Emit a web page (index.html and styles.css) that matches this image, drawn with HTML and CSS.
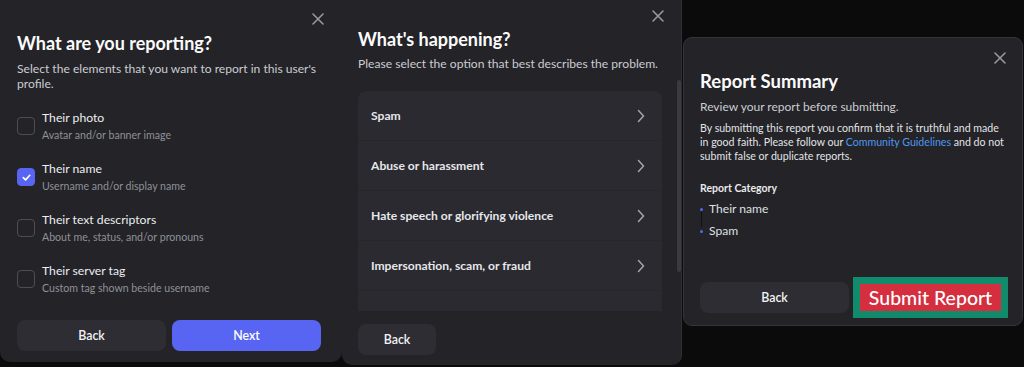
FILE: index.html
```html
<!DOCTYPE html>
<html lang="en">
<head>
<meta charset="utf-8">
<title>Report flow</title>
<link rel="stylesheet" href="styles.css">
</head>
<body>
<div class="stage">
  <section class="shot shot-1">
    <div class="modal m1">
      <button class="close" aria-label="Close"><svg viewBox="0 0 12 12" width="12" height="12"><path d="M1 1L11 11M11 1L1 11" stroke="currentColor" stroke-width="1.5" stroke-linecap="round"/></svg></button>
      <h1 class="title t1">What are you reporting?</h1>
      <p class="sub s1">Select the elements that you want to report in this user's profile.</p>
      <ul class="checks">
        <li class="check"><span class="box"></span><div class="ctext"><div class="cname">Their photo</div><div class="cdesc">Avatar and/or banner image</div></div></li>
        <li class="check"><span class="box on"><svg viewBox="0 0 12 12" width="11" height="11"><path d="M2.5 6.2L5 8.6L9.6 3.6" fill="none" stroke="#fff" stroke-width="1.8" stroke-linecap="round" stroke-linejoin="round"/></svg></span><div class="ctext"><div class="cname">Their name</div><div class="cdesc">Username and/or display name</div></div></li>
        <li class="check"><span class="box"></span><div class="ctext"><div class="cname">Their text descriptors</div><div class="cdesc">About me, status, and/or pronouns</div></div></li>
        <li class="check"><span class="box"></span><div class="ctext"><div class="cname">Their server tag</div><div class="cdesc">Custom tag shown beside username</div></div></li>
      </ul>
      <div class="actions a1">
        <button class="btn secondary wide">Back</button>
        <button class="btn primary wide">Next</button>
      </div>
    </div>
  </section>

  <section class="shot shot-2">
    <div class="modal m2">
      <button class="close" aria-label="Close"><svg viewBox="0 0 12 12" width="12" height="12"><path d="M1 1L11 11M11 1L1 11" stroke="currentColor" stroke-width="1.5" stroke-linecap="round"/></svg></button>
      <h1 class="title t2">What's happening?</h1>
      <p class="sub s2">Please select the option that best describes the problem.</p>
      <div class="scroller">
        <ul class="options">
          <li class="opt"><span>Spam</span><svg class="chev" viewBox="0 0 8 14" width="8" height="14"><path d="M1.5 1.5L6.5 7L1.5 12.5" fill="none" stroke="currentColor" stroke-width="1.5" stroke-linecap="round" stroke-linejoin="round"/></svg></li>
          <li class="opt"><span>Abuse or harassment</span><svg class="chev" viewBox="0 0 8 14" width="8" height="14"><path d="M1.5 1.5L6.5 7L1.5 12.5" fill="none" stroke="currentColor" stroke-width="1.5" stroke-linecap="round" stroke-linejoin="round"/></svg></li>
          <li class="opt"><span>Hate speech or glorifying violence</span><svg class="chev" viewBox="0 0 8 14" width="8" height="14"><path d="M1.5 1.5L6.5 7L1.5 12.5" fill="none" stroke="currentColor" stroke-width="1.5" stroke-linecap="round" stroke-linejoin="round"/></svg></li>
          <li class="opt"><span>Impersonation, scam, or fraud</span><svg class="chev" viewBox="0 0 8 14" width="8" height="14"><path d="M1.5 1.5L6.5 7L1.5 12.5" fill="none" stroke="currentColor" stroke-width="1.5" stroke-linecap="round" stroke-linejoin="round"/></svg></li>
          <li class="opt"><span></span></li>
        </ul>
        <div class="scrollbar"><div class="thumb"></div></div>
      </div>
      <div class="actions a2">
        <button class="btn secondary small">Back</button>
      </div>
    </div>
  </section>

  <section class="shot shot-3">
    <div class="modal m3">
      <button class="close" aria-label="Close"><svg viewBox="0 0 12 12" width="12" height="12"><path d="M1 1L11 11M11 1L1 11" stroke="currentColor" stroke-width="1.5" stroke-linecap="round"/></svg></button>
      <h1 class="title t3">Report Summary</h1>
      <p class="sub s3">Review your report before submitting.</p>
      <p class="fine">By submitting this report you confirm that it is truthful and made in good faith. Please follow our <a href="#">Community Guidelines</a> and do not submit false or duplicate reports.</p>
      <h2 class="cat">Report Category</h2>
      <ul class="crumbs">
        <li>Their name</li>
        <li>Spam</li>
      </ul>
      <div class="actions a3">
        <button class="btn secondary wide">Back</button>
        <div class="highlight"><button class="btn danger">Submit Report</button></div>
      </div>
    </div>
  </section>
</div>
</body>
</html>
```

FILE: styles.css
```css
* { box-sizing: border-box; }
html, body { margin: 0; padding: 0; }
body {
  width: 1024px;
  height: 367px;
  overflow: hidden;
  background: #0b0b0c;
  font-family: Lato, "Noto Sans", sans-serif;
  color: #f2f3f5;
}
ul { list-style: none; margin: 0; padding: 0; }
p, h1, h2 { margin: 0; }
button { font-family: inherit; border: 0; cursor: pointer; }

.stage { display: flex; height: 367px; align-items: flex-start; }
.shot { flex: none; }
.shot-1 { width: 342px; }
.shot-2 { width: 340px; }
.shot-3 { width: 342px; padding-top: 37px; }

.modal {
  position: relative;
  background: #232328;
  display: flex;
  flex-direction: column;
}
.m1 { height: 362px; padding: 31px 21px 0 17px; border-radius: 0 0 10px 10px; }
.m2 { height: 365px; padding: 27px 20px 0 16px; border-radius: 0 0 10px 10px; border-right: 1px solid #2f2f35; }
.m3 { width: 340px; margin-left: 1px; height: 289px; padding: 31px 14px 0 16px; border-radius: 9px; border: 1px solid #34343a; }

.close {
  position: absolute;
  background: none;
  padding: 0;
  color: #9a9ba3;
  width: 12px; height: 12px;
  display: flex;
}
.m1 .close { top: 13px; right: 18px; }
.m2 .close { top: 10px; right: 17px; }
.m3 .close { top: 14px; right: 16px; }

.title { font-size: 18px; line-height: 24px; font-weight: 700; color: #fbfbfc; }
.t3 { font-size: 18.5px; }
.sub { font-size: 12.1px; color: #cbcdd2; }
.s1 { margin-top: 6px; line-height: 15px; }
.s2 { margin-top: 5px; line-height: 16px; }
.s3 { margin-top: 5px; line-height: 18px; font-size: 12px; }

.checks { margin-top: 18px; display: flex; flex-direction: column; gap: 17px; }
.check { display: flex; align-items: center; gap: 7px; height: 34px; }
.box {
  width: 18px; height: 18px;
  border: 1px solid #4d4e55;
  border-radius: 4px;
  flex: none;
  display: flex; align-items: center; justify-content: center;
}
.box.on { background: #5865f2; border-color: #5865f2; }
.cname { font-size: 12.2px; line-height: 18px; color: #eceef0; }
.cdesc { font-size: 10.6px; line-height: 16px; color: #8f9199; }

.actions { display: flex; gap: 6px; }
.a1 { margin-top: 24px; }
.a2 { margin-top: 13px; }
.a3 { margin-top: auto; margin-bottom: 7px; align-items: center; gap: 4px; }

.btn {
  height: 31px;
  border-radius: 8px;
  font-size: 12.4px;
  font-weight: 600;
  color: #f2f3f5;
}
.wide { width: 149px; }
.small { width: 78px; }
.secondary { background: #2d2d33; }
.primary { background: #5865f2; color: #fff; }

.scroller { margin-top: 19px; display: flex; gap: 15px; height: 220px; }
.options {
  width: 304px;
  height: 220px;
  overflow: hidden;
  border-radius: 8px 8px 0 0;
  flex: none;
}
.opt {
  height: 50px;
  background: #2a2a30;
  border-bottom: 1px solid #26262b;
  display: flex;
  align-items: center;
  justify-content: space-between;
  padding: 0 17px 0 13px;
  font-size: 12.1px;
  font-weight: 700;
  color: #e6e7ea;
}
.chev { color: #a3a5ab; }
.scrollbar { width: 4px; margin-top: -11px; height: 192px; }
.thumb { width: 4px; height: 192px; background: #3a3a40; border-radius: 2px; }

.fine { margin-top: 5px; font-size: 10.6px; line-height: 14px; color: #e2e3e6; }
.fine a { color: #4f98ef; text-decoration: none; }
.cat { margin-top: 18px; font-size: 10.5px; line-height: 14px; font-weight: 700; color: #e9eaec; }
.crumbs { margin-top: 3px; display: flex; flex-direction: column; }
.crumbs li { position: relative; font-size: 12.1px; line-height: 22px; padding-left: 9px; color: #dfe0e3; }
.crumbs li::before {
  content: "";
  position: absolute;
  left: 0; top: 9.5px;
  width: 3px; height: 3px;
  border-radius: 50%;
  background: #5865f2;
}
.crumbs li:first-child::after {
  content: "";
  position: absolute;
  left: 1px; top: 14px;
  width: 1px; height: 15px;
  background: #111114;
}
.highlight { background: #128a6c; padding: 7px; }
.danger {
  display: block;
  height: 27px;
  width: 141px;
  border-radius: 0;
  background: #d42e3f;
  color: #fff;
  font-size: 19.5px;
  font-weight: 500;
  padding: 0;
  line-height: 27px;
}
```
